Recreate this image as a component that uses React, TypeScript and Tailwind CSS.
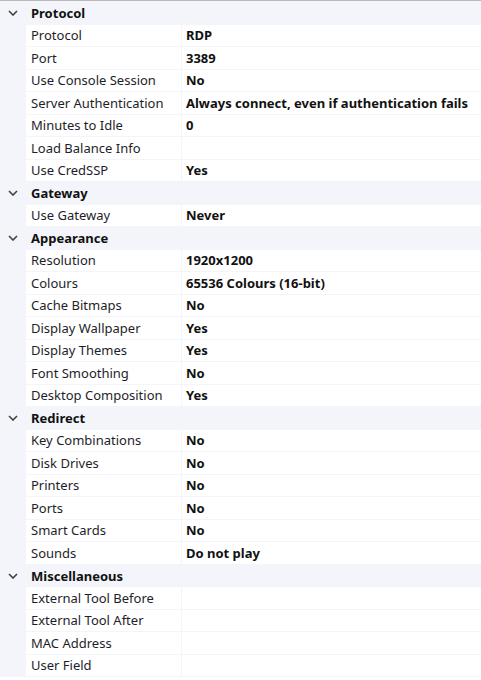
import React from 'react';

interface Prop {
  name: string;
  value?: string;
}

interface Section {
  title: string;
  items: Prop[];
}

const sections: Section[] = [
  {
    title: 'Protocol',
    items: [
      { name: 'Protocol', value: 'RDP' },
      { name: 'Port', value: '3389' },
      { name: 'Use Console Session', value: 'No' },
      { name: 'Server Authentication', value: 'Always connect, even if authentication fails' },
      { name: 'Minutes to Idle', value: '0' },
      { name: 'Load Balance Info' },
      { name: 'Use CredSSP', value: 'Yes' },
    ],
  },
  {
    title: 'Gateway',
    items: [{ name: 'Use Gateway', value: 'Never' }],
  },
  {
    title: 'Appearance',
    items: [
      { name: 'Resolution', value: '1920x1200' },
      { name: 'Colours', value: '65536 Colours (16-bit)' },
      { name: 'Cache Bitmaps', value: 'No' },
      { name: 'Display Wallpaper', value: 'Yes' },
      { name: 'Display Themes', value: 'Yes' },
      { name: 'Font Smoothing', value: 'No' },
      { name: 'Desktop Composition', value: 'Yes' },
    ],
  },
  {
    title: 'Redirect',
    items: [
      { name: 'Key Combinations', value: 'No' },
      { name: 'Disk Drives', value: 'No' },
      { name: 'Printers', value: 'No' },
      { name: 'Ports', value: 'No' },
      { name: 'Smart Cards', value: 'No' },
      { name: 'Sounds', value: 'Do not play' },
    ],
  },
  {
    title: 'Miscellaneous',
    items: [
      { name: 'External Tool Before' },
      { name: 'External Tool After' },
      { name: 'MAC Address' },
      { name: 'User Field' },
    ],
  },
];

const Chevron = () => (
  <svg width="10" height="6" viewBox="0 0 10 6" className="shrink-0">
    <path d="M1 1 L5 5 L9 1" fill="none" stroke="#404040" strokeWidth="1.6" />
  </svg>
);

export default function App() {
  return (
    <div
      className="w-[481px] h-[680px] bg-white text-[13px] leading-[18px] text-[#1e1e2a]"
      style={{ fontFamily: '"Noto Sans", "Open Sans", sans-serif' }}
    >
      <div className="border-t border-[#b9b9b9] bg-[#f3f5fa] pt-[1px]">
        {sections.map((section) => (
          <div key={section.title}>
            <div className="flex h-[22.5px] items-center">
              <div className="flex w-[31px] pl-[8px]">
                <Chevron />
              </div>
              <span className="font-bold text-[#111]">{section.title}</span>
            </div>
            {section.items.map((item) => (
              <div key={item.name} className="flex h-[22.5px] pb-px pl-[26px]">
                <div className="flex w-[155px] items-center overflow-hidden whitespace-nowrap bg-white pl-[5px]">
                  {item.name}
                </div>
                <div className="ml-px flex flex-1 items-center overflow-hidden whitespace-nowrap bg-white pl-[4px] font-bold text-[#111]">
                  {item.value}
                </div>
              </div>
            ))}
          </div>
        ))}
      </div>
    </div>
  );
}
